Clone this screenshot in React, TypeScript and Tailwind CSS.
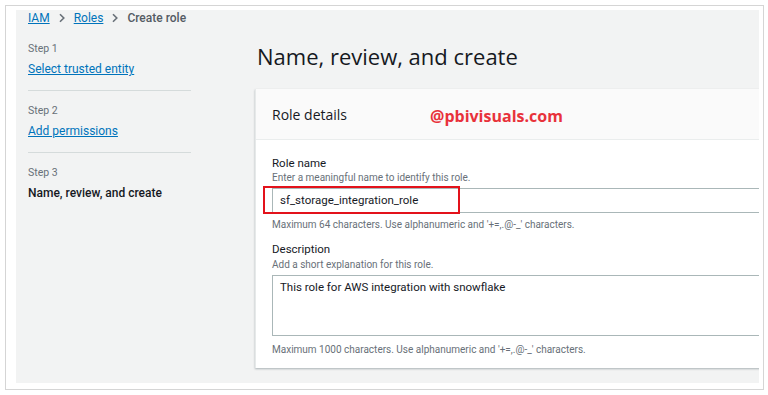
export default function App() {
  return (
    <div
      className="w-[768px] h-[395px] bg-white pt-[5px] pl-[5px]"
      style={{ fontFamily: 'Roboto, "Noto Sans", sans-serif' }}
    >
      <div className="w-[759px] h-[385px] border border-[#d5d5d5] pt-[4px] pl-[10px] pr-[4px] pb-[6px]">
        <div className="h-full bg-[#f2f3f3] overflow-hidden flex">
          {/* Left — steps */}
          <div className="w-[239px] shrink-0 pl-[12px]">
            <nav className="flex items-center gap-[9px] text-[12px] leading-[16px]">
              <a className="text-[#0073bb] underline">IAM</a>
              <Chevron />
              <a className="text-[#0073bb] underline">Roles</a>
              <Chevron />
              <span className="text-[#545b64] font-medium">Create role</span>
            </nav>
            <div className="w-[163px] mt-[16px]">
              <StepItem step="Step 1" label="Select trusted entity" link />
              <div className="border-t border-[#d5dbdb] my-[13px]" />
              <StepItem step="Step 2" label="Add permissions" link />
              <div className="border-t border-[#d5dbdb] my-[13px]" />
              <StepItem step="Step 3" label="Name, review, and create" />
            </div>
          </div>

          {/* Right — form */}
          <div className="flex-1 min-w-0">
            <h1
              className="ml-[2px] text-[22px] leading-[28px] text-[#16191f] mt-[32px]"
              style={{ fontFamily: '"Open Sans", sans-serif' }}
            >
              Name, review, and create
            </h1>
            <div className="mt-[19px] w-[560px] bg-white shadow-[0_1px_2px_rgba(0,28,36,0.3)] border-l border-[#e6e9e9]">
              <div className="h-[51px] bg-[#fafafa] border-b border-[#eaeded] flex items-center pl-[16px]">
                <h2
                  className="text-[14px] text-[#16191f]"
                  style={{ fontFamily: '"Open Sans", sans-serif' }}
                >
                  Role details
                </h2>
                <span
                  className="ml-[83px] mt-[4px] text-[16px] font-bold text-[#e8323b]"
                  style={{ fontFamily: '"Open Sans", sans-serif' }}
                >
                  @pbivisuals.com
                </span>
              </div>
              <div className="pl-[16px] pt-[15px] pb-[11px]">
                <div className="text-[11.5px] leading-[16px] text-[#16191f]">Role name</div>
                <div className="text-[10px] leading-[14px] text-[#687078]">
                  Enter a meaningful name to identify this role.
                </div>
                <div className="relative mt-[3px]">
                  <div className="h-[25px] border border-[#aab7b8] border-r-0 flex items-center pl-[7px] text-[11.5px] text-[#16191f]">
                    sf_storage_integration_role
                  </div>
                  <div className="absolute left-[-9px] top-[-2px] w-[197px] h-[28px] border-2 border-[#e3121b]" />
                </div>
                <div className="text-[10px] leading-[14px] text-[#687078] mt-[5px]">
                  Maximum 64 characters. Use alphanumeric and '+=,.@-_' characters.
                </div>

                <div className="text-[11.5px] leading-[16px] text-[#16191f] mt-[9px]">Description</div>
                <div className="text-[10px] leading-[14px] text-[#687078] mt-[1px]">
                  Add a short explanation for this role.
                </div>
                <div className="mt-[3px] h-[61px] border border-[#aab7b8] border-r-0 pl-[7px] pt-[3px] text-[11.5px] leading-[16px] text-[#16191f]">
                  This role for AWS integration with snowflake
                </div>
                <div className="text-[10px] leading-[14px] text-[#687078] mt-[7px]">
                  Maximum 1000 characters. Use alphanumeric and '+=,.@-_' characters.
                </div>
              </div>
            </div>
          </div>
        </div>
      </div>
    </div>
  );
}

function Chevron() {
  return (
    <svg width="6" height="10" viewBox="0 0 6 10" fill="none" stroke="#687078" strokeWidth="1.6">
      <path d="M1 1.2 4.8 5 1 8.8" />
    </svg>
  );
}

function StepItem({ step, label, link }: { step: string; label: string; link?: boolean }) {
  return (
    <div>
      <div className="text-[10.5px] leading-[14px] text-[#687078]">{step}</div>
      <div
        className={
          link
            ? "mt-[5px] text-[12px] leading-[16px] text-[#0073bb] underline"
            : "mt-[5px] text-[12px] leading-[16px] text-[#16191f] font-medium"
        }
      >
        {label}
      </div>
    </div>
  );
}
